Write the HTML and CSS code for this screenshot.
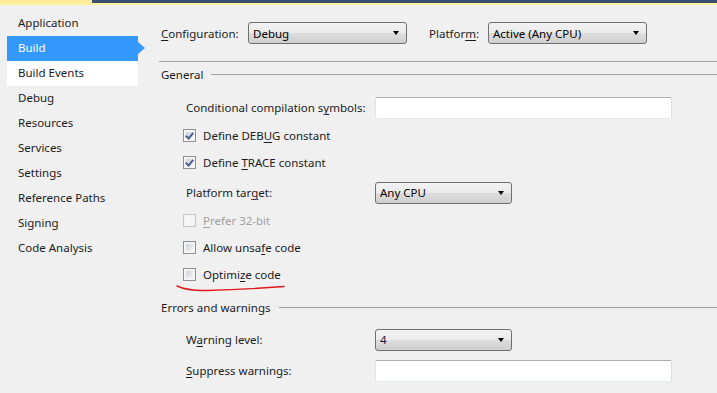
FILE: index.html
```html
<!DOCTYPE html>
<html lang="en">
<head>
    <meta charset="UTF-8">
    <title>Build - Project Properties</title>
    <link rel="stylesheet" href="styles.css">
</head>
<body>
    <!-- Document tab strip (cut off at the top) -->
    <div class="tab-strip">
        <div class="active-tab"></div>
    </div>

    <div class="designer">
        <nav class="sidebar">
            <div class="nav-item">Application</div>
            <div class="nav-item selected">Build</div>
            <div class="nav-item hover">Build Events</div>
            <div class="nav-item">Debug</div>
            <div class="nav-item">Resources</div>
            <div class="nav-item">Services</div>
            <div class="nav-item">Settings</div>
            <div class="nav-item">Reference Paths</div>
            <div class="nav-item">Signing</div>
            <div class="nav-item">Code Analysis</div>
        </nav>

        <main class="page">
            <div class="config-bar">
                <span class="config-label"><u>C</u>onfiguration:</span>
                <div class="combo combo-wide">
                    <span>Debug</span>
                    <span class="arrow"></span>
                </div>
                <span class="platform-label">Platfor<u>m</u>:</span>
                <div class="combo combo-wide">
                    <span>Active (Any CPU)</span>
                    <span class="arrow"></span>
                </div>
            </div>

            <div class="group-title">General</div>

            <div class="row">
                <span class="field-label">Conditional compilation s<u>y</u>mbols:</span>
                <div class="textbox"></div>
            </div>
            <label class="row check-row">
                <span class="checkbox checked"></span>
                <span>Define DEB<u>U</u>G constant</span>
            </label>
            <label class="row check-row">
                <span class="checkbox checked"></span>
                <span>Define <u>T</u>RACE constant</span>
            </label>
            <div class="row row-gap">
                <span class="field-label">Platform tar<u>g</u>et:</span>
                <div class="combo combo-narrow">
                    <span>Any CPU</span>
                    <span class="arrow"></span>
                </div>
            </div>
            <label class="row check-row disabled">
                <span class="checkbox"></span>
                <span><u>P</u>refer 32-bit</span>
            </label>
            <label class="row check-row">
                <span class="checkbox"></span>
                <span>Allow unsa<u>f</u>e code</span>
            </label>
            <label class="row check-row marked">
                <span class="checkbox"></span>
                <span>Optimi<u>z</u>e code</span>
                <!-- red pen mark under the option -->
                <svg class="pen-mark" width="112" height="10" viewBox="0 0 112 10">
                    <path d="M1 2 Q 12 7 30 6.5 Q 70 5.5 108 2.5" fill="none" stroke="#e3161b" stroke-width="1.4" stroke-linecap="round"/>
                </svg>
            </label>

            <div class="group-title errors-title">Errors and warnings</div>

            <div class="row">
                <span class="field-label">W<u>a</u>rning level:</span>
                <div class="combo combo-narrow">
                    <span class="level">4</span>
                    <span class="arrow"></span>
                </div>
            </div>
            <div class="row row-tight">
                <span class="field-label"><u>S</u>uppress warnings:</span>
                <div class="textbox"></div>
            </div>
        </main>
    </div>
</body>
</html>
```

FILE: styles.css
```css
body, html {
    margin: 0;
    padding: 0;
    background-color: #f0f0f0;
    font-family: 'Noto Sans', 'Open Sans', sans-serif;
    font-size: 11.5px;
    color: #1b1b1b;
    overflow: hidden;
}

u {
    text-decoration-thickness: 1px;
    text-underline-offset: 2px;
}

/* Tab strip at the very top */
.tab-strip {
    height: 3px;
    background: #384f70;
    border-bottom: 2px solid #fff29d;
}

.active-tab {
    width: 92px;
    height: 3px;
    background: #ffec9a;
}

.designer {
    display: flex;
}

/* Left navigation */
.sidebar {
    width: 159px;
    flex-shrink: 0;
    padding-top: 6px;
}

.nav-item {
    position: relative;
    width: 120px;
    height: 25px;
    line-height: 24px;
    margin-left: 7px;
    padding-left: 11px;
}

.nav-item.selected {
    background: #3399ff;
    color: #fff;
}

.nav-item.selected::after {
    content: '';
    position: absolute;
    right: -7px;
    top: 6px;
    border-left: 7px solid #3399ff;
    border-top: 6.5px solid transparent;
    border-bottom: 6.5px solid transparent;
}

.nav-item.hover {
    background: #fff;
}

/* Right hand page */
.page {
    flex: 1;
    padding-left: 2px;
}

.config-bar {
    display: flex;
    align-items: center;
    height: 56px;
    border-bottom: 1px solid #a0a0a0;
    margin-left: -2px;
    padding-left: 2px;
}

.config-label {
    width: 87px;
}

.platform-label {
    width: 59px;
    margin-left: 22px;
}

.combo {
    position: relative;
    box-sizing: border-box;
    height: 22px;
    display: flex;
    align-items: center;
    padding-left: 4px;
    border: 1px solid #707070;
    border-radius: 3px;
    background: linear-gradient(to bottom, #f2f2f2 0%, #ebebeb 50%, #dddddd 51%, #cfcfcf 100%);
    color: #000;
}

.combo-wide {
    width: 159px;
}

.combo-narrow {
    width: 137px;
}

.arrow {
    position: absolute;
    right: 7px;
    top: 8px;
    border-top: 4px solid #000;
    border-left: 3.5px solid transparent;
    border-right: 3.5px solid transparent;
}

.level {
    color: #2a1640;
}

.group-title {
    display: flex;
    align-items: center;
    height: 16px;
    margin-top: 4px;
}

.group-title::after {
    content: '';
    flex: 1;
    height: 1px;
    background: #a0a0a0;
    margin-left: 8px;
}

.errors-title {
    margin-top: 12px;
}

/* Form rows */
.row {
    display: flex;
    align-items: center;
    box-sizing: border-box;
    height: 27px;
    padding-left: 25px;
}

.group-title + .row {
    margin-top: 12px;
}

.errors-title + .row {
    margin-top: 11px;
}

.row-gap {
    margin-top: 4px;
}

.row-tight {
    margin-top: 4px;
}

.field-label {
    width: 189px;
    flex-shrink: 0;
}

.textbox {
    box-sizing: border-box;
    width: 297px;
    height: 22px;
    background: #fff;
    border: 1px solid #e3e9ef;
    border-top-color: #abadb3;
    border-left-color: #e2e3ea;
    border-right-color: #dbdfe6;
    border-radius: 2px;
}

.check-row {
    position: relative;
    padding-left: 22px;
    padding-top: 2px;
}

.checkbox {
    box-sizing: border-box;
    width: 13px;
    height: 13px;
    margin-right: 7px;
    border: 1px solid #8e8f8f;
    background: #f4f4f4;
    position: relative;
}

.checkbox::before {
    content: '';
    position: absolute;
    inset: 2px;
    background: linear-gradient(135deg, #cbcfd5, #f6f6f6);
}

.checkbox.checked::after {
    content: '';
    position: absolute;
    left: 3px;
    top: 1px;
    width: 3px;
    height: 6px;
    border-right: 2px solid #4a5f97;
    border-bottom: 2px solid #4a5f97;
    transform: rotate(40deg);
}

.disabled {
    color: #a0a0a0;
}

.disabled .checkbox {
    border-color: #c8c8c8;
}

.disabled .checkbox::before {
    background: #f6f6f6;
}

.pen-mark {
    position: absolute;
    left: 15px;
    top: 24px;
}
```
